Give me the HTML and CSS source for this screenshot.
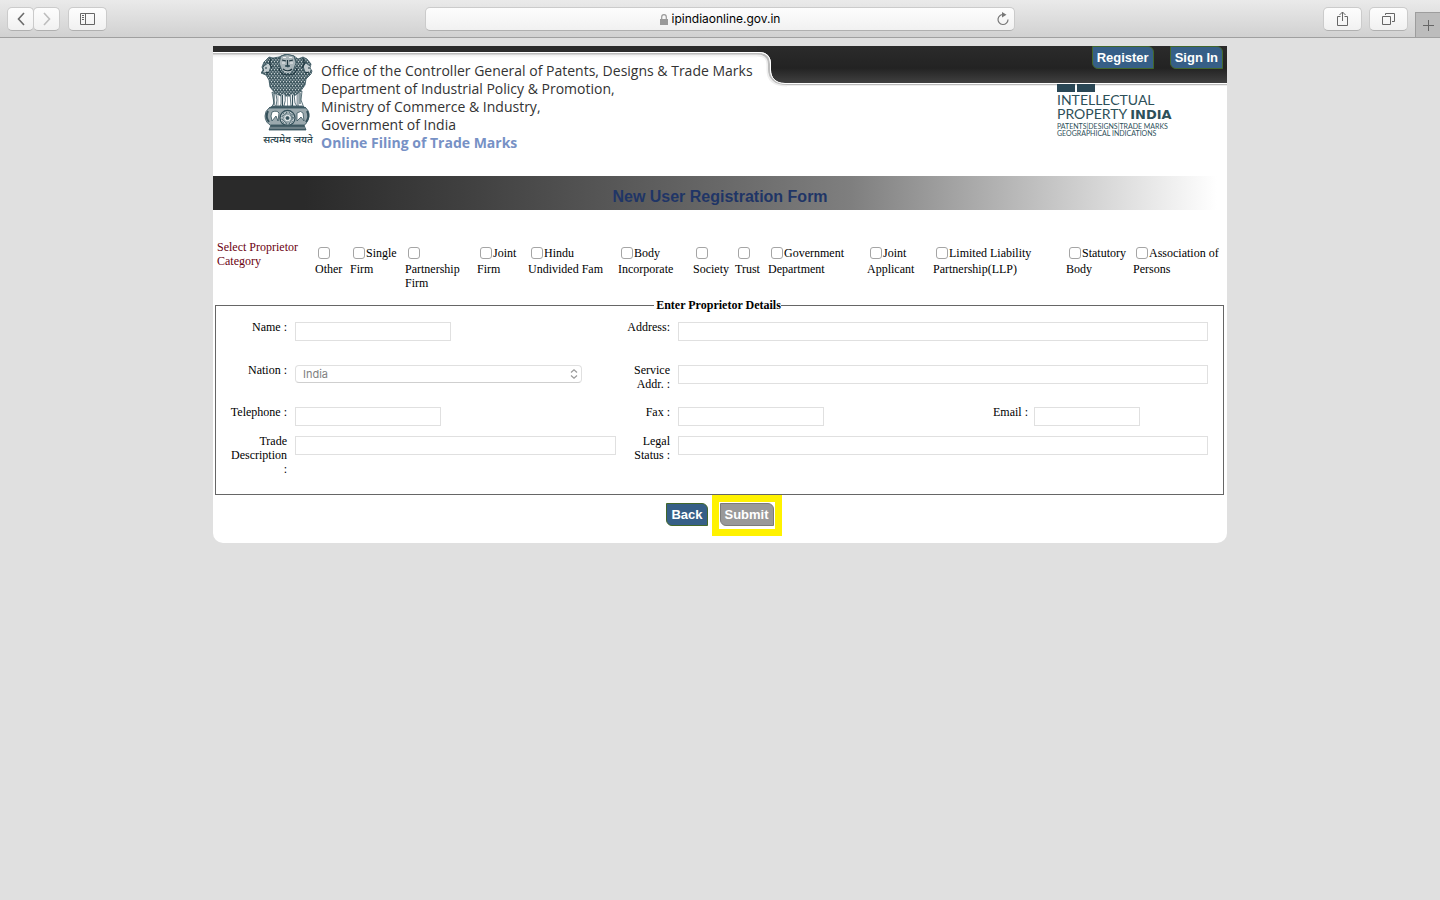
FILE: index.html
```
<!DOCTYPE html>
<html lang="en">
<head>
    <meta charset="utf-8">
    <title>New User Registration Form</title>
    <link rel="stylesheet" href="styles.css">
</head>
<body>
    <div class="toolbar">
        <div class="tools">
            <div class="nav-group">
                <button class="tool nav" aria-label="Back"><svg width="8" height="14" viewBox="0 0 8 14"><path d="M7 1L1.5 7L7 13" stroke="#6b6b6b" stroke-width="1.6"/></svg></button>
                <button class="tool nav" aria-label="Forward"><svg width="8" height="14" viewBox="0 0 8 14"><path d="M1 1L6.5 7L1 13" stroke="#bdbdbd" stroke-width="1.6"/></svg></button>
            </div>
            <button class="tool" aria-label="Show sidebar"><svg width="15" height="12" viewBox="0 0 15 12"><path d="M.5.5h14v11H.5zM5.5.5v11M2 2.5h2M2 4.500h2M2 6.500h2" stroke="#666"/></svg></button>
        </div>
        <div class="address">
            <span></span>
            <span class="url"><svg width="8" height="11" viewBox="0 0 8 11"><path d="M0 5h8v6H0z" fill="#999"/><path d="M1.700 5.500V3a2.300 2.300 0 0 1 4.600 0v2.500" stroke="#999" stroke-width="1.200"/></svg>ipindiaonline.gov.in</span>
            <button class="reload" aria-label="Reload"><svg width="12" height="14" viewBox="0 0 12 14"><path d="M7 2.600A5 5 0 1 0 11 7.500" stroke="#777" stroke-width="1.200"/><path d="M5 0l4.500 2.700L5 5.500z" fill="#777"/></svg></button>
        </div>
        <div class="tools tools-right">
            <button class="tool" aria-label="Share"><svg width="13" height="16" viewBox="0 0 13 16"><path d="M4.500 5.500h-3v9h10v-9h-3M6.500 10V1M3.500 4l3-3l3 3" stroke="#666"/></svg></button>
            <button class="tool" aria-label="Show all tabs"><svg width="13" height="12" viewBox="0 0 13 12"><path d="M.5 3.500h8v8h-8zM3.500 2V.5h9v8H10" stroke="#666"/></svg></button>
            <button class="new-tab" aria-label="New tab"><svg width="11" height="11" viewBox="0 0 11 11"><path d="M5.500 0v11M0 5.500h11" stroke="#666"/></svg></button>
        </div>
    </div>

    <div class="container">
        <div class="header">
            <div class="brand">
                <div class="emblem">
                    <svg width="52" height="80" viewBox="0 0 52 80">
                        <defs>
                            <pattern id="fur" width="3" height="4" patternUnits="userSpaceOnUse">
                                <path d="M0 0h3v4H0z" fill="#6f838a"/>
                                <path d="M0 0l1.500 1.500L3 0M-1.500 2.500L0 3.500L1.500 2.500M1.500 2.500L3 3.500" stroke="#2c464f" stroke-width=".8"/>
                                <path d="M1 3.500h1M2.500 1.800h.5" stroke="#dde4e6" stroke-width=".8"/>
                            </pattern>
                        </defs>
                        <g stroke="#34505a" stroke-width=".8" stroke-linejoin="round">
                            <path d="M18 3L12 4L8 3L3 8L1 13L2 16L0 19L5 21L8 26L9 33L14 39L20 42H33L39 38L44 31L45 25L50 20L51 17L49 14L50 10L46 5L42 3L37 5L33 2L25 0z" fill="url(#fur)"/>
                            <path d="M11 38L15 40Q17 46 15 52L10 54L13 49zM20 40h4q1 7-1 12l-5 3l2-5zM29 40h4l1 9l3 5l-7-2zM37 39l4-2l-1 9l3 8l-6-2z" fill="#f4f6f7"/>
                            <path d="M13 39v12M21.500 41v11M31.500 41v11M39 39v11" stroke-width="1.100"/>
                            <path d="M17 41v12M26.500 41v13M36 41v12" stroke="#839399"/>
                            <path d="M20 2q6-3 13 0l2 7l-3 8q-5 4-11 0l-3-8z" fill="#a9b5b9"/>
                            <path d="M21 6l4 1M32 6l-4 1M26.500 6v5M22 15q5 4 9 0M18 14q1 7 9 7t9-7" stroke="#1f3740" stroke-width="1.200"/>
                            <path d="M24 12q3-2 5 0l-2 1z" fill="#1f3740"/>
                            <path d="M21 9h3M29 9h3M23 18h7M22 3.500h3M28 3.500h3" stroke="#fff"/>
                            <path d="M3 12l4-3l3 3l-2 6l-5 1M49 12l-4-3l-3 3l2 6l5 1" fill="#c3cccf"/>
                            <path d="M4 14h2M47 14h2M5 18l3 1M48 18l-4 1M10 5q-3 4 1 9M42 5q3 4-1 9" stroke="#1f3740" stroke-width="1.200"/>
                            <path d="M12 52h29l4 2H8z" fill="#50666e"/>
                            <path d="M8 54h37q5 5 2 12q-2 5-5 6H11q-7-3-7-10q0-5 4-8z" fill="#9aa8ad"/>
                            <path d="M7 57q-3 6 1 11M46 57q3 6-1 11" stroke-width="2"/>
                            <path d="M11 58q5-2 7 1l-1 8l-2-5l-4 5l-1-5zM36 59q4-3 6 0l1 8l-3-4l-4 4z" fill="#fff"/>
                            <circle cx="26.500" cy="64" r="7.500" fill="#e4eaec" stroke-width="1.300"/>
                            <circle cx="26.500" cy="64" r="4.800" stroke-width="3" stroke-dasharray=".7 .6"/>
                            <circle cx="26.500" cy="64" r="1.600" fill="#34505a"/>
                            <path d="M10 71h33l2 5H8z" fill="#465e67"/>
                            <path d="M9 74h35" stroke="#a9b5b9"/>
                        </g>
                    </svg>
                    <span class="motto" lang="hi">सत्यमेव जयते</span>
                </div>
                <div class="office">
                    Office of the Controller General of Patents, Designs &amp; Trade Marks<br>
                    Department of Industrial Policy &amp; Promotion,<br>
                    Ministry of Commerce &amp; Industry,<br>
                    Government of India
                    <strong>Online Filing of Trade Marks</strong>
                </div>
            </div>
            <svg class="curve" width="30" height="42" viewBox="0 0 30 42">
                <defs>
                    <linearGradient id="bar" x2="0" y2="1">
                        <stop offset="0" stop-color="#2b2b2b"/>
                        <stop offset=".6" stop-color="#232323"/>
                        <stop offset="1" stop-color="#404040"/>
                    </linearGradient>
                </defs>
                <path d="M0 9C9 9 11 13 11 19V24C11 33 16 39 30 39" stroke="#eee" stroke-width="3"/>
                <path d="M0 7.500C9 7.500 12 12 12 18V23C12 32 18 38 30 38" stroke="#bbb" stroke-width="2"/>
                <path d="M0 0H30V37H28C18 37 14 31 14 24V18C14 11 10 6 2 6H0z" fill="url(#bar)"/>
                <path d="M0 6.500H2C10 6.500 13.500 11 13.500 18V24C13.500 31 18 37.500 28 37.500H30" stroke="#fff"/>
            </svg>
            <div class="right">
                <div class="bar">
                    <button class="btn">Register</button>
                    <button class="btn">Sign In</button>
                </div>
                <div class="ip-logo">
                    <div class="blocks"><i></i><i></i></div>
                    <div class="ip-name">INTELLECTUAL<br>PROPERTY <b>INDIA</b></div>
                    <div class="ip-small">PATENTS|DESIGNS|TRADE MARKS<br>GEOGRAPHICAL INDICATIONS</div>
                </div>
            </div>
        </div>

        <h1>New User Registration Form</h1>

        <form>
            <div class="categories" role="group" aria-labelledby="category-title">
                <span class="category-title" id="category-title">Select Proprietor Category</span>
                <label><input type="checkbox"><br>Other</label>
                <label><input type="checkbox">Single<br>Firm</label>
                <label><input type="checkbox"><br>Partnership<br>Firm</label>
                <label><input type="checkbox">Joint<br>Firm</label>
                <label><input type="checkbox">Hindu<br>Undivided Fam</label>
                <label><input type="checkbox">Body<br>Incorporate</label>
                <label><input type="checkbox"><br>Society</label>
                <label><input type="checkbox"><br>Trust</label>
                <label><input type="checkbox">Government<br>Department</label>
                <label><input type="checkbox">Joint<br>Applicant</label>
                <label><input type="checkbox">Limited Liability<br>Partnership(LLP)</label>
                <label><input type="checkbox">Statutory<br>Body</label>
                <label><input type="checkbox">Association of<br>Persons</label>
            </div>

            <fieldset>
                <legend>Enter Proprietor Details</legend>
                <div class="details">
                    <label for="name">Name :</label>
                    <div class="field"><input type="text" id="name" class="w-name"></div>
                    <label for="address">Address:</label>
                    <div class="field"><input type="text" id="address"></div>

                    <label for="nation">Nation :</label>
                    <div class="field">
                        <div class="select">
                            <select id="nation"><option>India</option></select>
                            <svg width="8" height="10" viewBox="0 0 8 10"><path d="M1 3.500L4 .8L7 3.500M1 6.500L4 9.200L7 6.500" stroke="#999" stroke-width="1.200"/></svg>
                        </div>
                    </div>
                    <label for="service">Service Addr. :</label>
                    <div class="field"><input type="text" id="service"></div>

                    <label for="telephone">Telephone :</label>
                    <div class="field"><input type="text" id="telephone" class="w-phone"></div>
                    <label for="fax">Fax :</label>
                    <div class="field split">
                        <input type="text" id="fax" class="w-phone">
                        <label for="email">Email :</label>
                        <input type="text" id="email" class="w-email">
                    </div>

                    <label for="trade">Trade Description :</label>
                    <div class="field"><input type="text" id="trade"></div>
                    <label for="legal">Legal Status :</label>
                    <div class="field"><input type="text" id="legal"></div>
                </div>
            </fieldset>

            <div class="actions">
                <button type="button" class="btn">Back</button>
                <div class="highlight"><button type="submit" class="btn btn-off">Submit</button></div>
            </div>
        </form>
    </div>
</body>
</html>
```
FILE: styles.css
```
* {
    box-sizing: border-box;
}
body {
    margin: 0;
    background: #e0e0e0;
    font-family: "Liberation Serif", "Times New Roman", serif;
    font-size: 12px;
    line-height: 14px;
    color: #000;
}
svg {
    display: block;
    fill: none;
    flex: none;
}

/* browser toolbar */
.toolbar {
    display: grid;
    grid-template-columns: 1fr minmax(0, 590px) 1fr;
    align-items: start;
    height: 38px;
    border-bottom: 1px solid #a0a0a0;
    background: linear-gradient(#eaeaea, #d1d1d1);
}
.tools {
    display: flex;
    gap: 8px;
    padding: 7px 0 0 7px;
}
.nav-group {
    display: flex;
}
.nav-group .tool + .tool {
    margin-left: -1px;
}
.tools-right {
    justify-content: flex-end;
    gap: 7px;
    padding-left: 0;
}
.tool,
.address {
    display: flex;
    align-items: center;
    justify-content: center;
    height: 24px;
    border: 1px solid #cbcbcb;
    border-bottom-color: #b0b0b0;
    border-radius: 5px;
    background: linear-gradient(#fdfdfd, #f1f1f1);
}
.tool {
    width: 39px;
    padding: 0;
}
.nav {
    width: 27px;
}
.new-tab {
    display: flex;
    align-items: center;
    justify-content: center;
    width: 25px;
    height: 25px;
    margin-top: 5px;
    padding: 0;
    border: 1px solid #9d9d9d;
    border-width: 1px 0 0 1px;
    background: #bcbcbc;
}
.address {
    justify-content: space-between;
    margin-top: 7px;
    padding: 0 5px;
}
.address > span:first-child {
    width: 12px;
}
.url {
    display: flex;
    align-items: center;
    gap: 4px;
    font-family: Inter, sans-serif;
    font-size: 12px;
}
.reload {
    padding: 0;
    border: 0;
    background: none;
}

/* page */
.container {
    max-width: 1014px;
    margin: 8px auto;
    border-radius: 0 0 10px 10px;
    background: #fff;
}
.header {
    display: flex;
    height: 130px;
}
.brand {
    display: flex;
    gap: 6px;
    flex: 0 0 544px;
    padding: 2px 0 0 48px;
    border-top: 6px solid #2b2b2b;
    background: linear-gradient(#fff 1px, #bbb 1px, #bbb 2px, #eee 3px, #fff 6px);
}
.emblem {
    width: 54px;
}
.motto {
    display: block;
    margin-top: -2px;
    font-family: "Noto Sans", sans-serif;
    font-size: 10px;
    font-weight: 500;
    color: #263f48;
    white-space: nowrap;
    text-align: center;
}
.office {
    padding-top: 8px;
    font-family: "Open Sans", sans-serif;
    font-size: 14px;
    line-height: 18px;
    color: #333;
    white-space: nowrap;
}
.office strong {
    display: block;
    color: #7791c5;
}
.right {
    flex: 1;
}
.bar {
    display: flex;
    justify-content: flex-end;
    align-items: flex-start;
    gap: 16px;
    height: 37px;
    padding-right: 4px;
    background: linear-gradient(#2b2b2b, #232323 60%, #404040);
    box-shadow: 0 1px #fff, 0 2px #bbb, 0 3px #eee;
}
.btn {
    height: 23px;
    padding: 0 4px;
    border: 1px solid #43682a;
    border-radius: 0 6px 0 6px;
    background: #365f87;
    font: bold 13px/20px "Liberation Sans", Arial, sans-serif;
    color: #fff;
}
.ip-logo {
    position: relative;
    width: 122px;
    margin: 1px 48px 0 auto;
    color: #2d5059;
    white-space: nowrap;
}
.blocks {
    display: flex;
    gap: 2px;
}
.blocks i {
    width: 18px;
    height: 8px;
    background: #2a4755;
}
.ip-name {
    margin-top: 1px;
    font-family: Lato, sans-serif;
    font-size: 14px;
    line-height: 14px;
}
.ip-name b {
    font-family: "DejaVu Sans", sans-serif;
    font-size: 13px;
    line-height: 1;
}
.ip-small {
    margin-top: 2px;
    font-family: Lato, sans-serif;
    font-size: 7px;
    line-height: 7px;
}
h1 {
    height: 34px;
    margin: 0;
    padding-top: 4px;
    background: linear-gradient(90deg, #2a2a2a 9%, #404040 25%, #686868 50%, #7f7f7f 63%, #fff 99%);
    font: bold 16px/34px "Liberation Sans", Arial, sans-serif;
    color: #1f3566;
    text-align: center;
}

/* proprietor category */
.categories {
    display: grid;
    grid-template-columns: 98fr 35fr 55fr 72fr 51fr 90fr 75fr 42fr 33fr 99fr 66fr 133fr 67fr 90fr;
    padding: 30px 4px 0;
    white-space: nowrap;
}
.categories input {
    appearance: none;
    width: 12px;
    height: 12px;
    margin: 7px 1px 3px 3px;
    border: 1px solid #a5a5a5;
    border-radius: 3px;
    background: #fff;
    vertical-align: -5px;
}
.category-title {
    padding-right: 16px;
    color: #6b0010;
    white-space: normal;
}

/* details */
fieldset {
    height: 197px;
    margin: 8px 3px 0 2px;
    padding: 8px 15px 0 11px;
    border: 1px solid #666;
}
legend {
    margin: 0 auto;
    padding: 0 0 0 2px;
    font-weight: bold;
}
.details {
    display: grid;
    grid-template-columns: 60px 321fr 46px 530fr;
    grid-template-rows: 43px 42px 29px auto;
    column-gap: 8px;
}
.details label {
    text-align: right;
}
.field {
    padding-top: 2px;
}
.field input {
    display: block;
    width: 100%;
    height: 19px;
    padding: 0 4px;
    border: 1px solid #e0e0e0;
}
.field .w-name {
    width: 156px;
}
.field .w-phone {
    width: 146px;
}
.field .w-email {
    width: 106px;
}
.split {
    display: flex;
    padding-right: 68px;
}
.split label {
    margin: -2px 6px 0 auto;
}
.select {
    position: relative;
    width: 287px;
}
.select select {
    appearance: none;
    display: block;
    width: 100%;
    height: 18px;
    padding: 0 7px;
    border: 1px solid #e0e0e0;
    border-bottom-color: #cfcfcf;
    border-radius: 4px;
    background: #fff;
    font: 11px/16px Inter, sans-serif;
    color: #7f7f7f;
}
.select svg {
    position: absolute;
    top: 4px;
    right: 4px;
}
.actions {
    display: flex;
    justify-content: center;
    align-items: flex-start;
    gap: 4px;
    padding: 0 0 7px 8px;
}
.actions > .btn {
    margin-top: 8px;
}
.highlight {
    padding: 1px 1px 3px;
    border: 7px solid #fff200;
}
.highlight .btn {
    display: block;
}
.actions .btn-off {
    border-color: #7c7c7c;
    background: #999;
}
```
